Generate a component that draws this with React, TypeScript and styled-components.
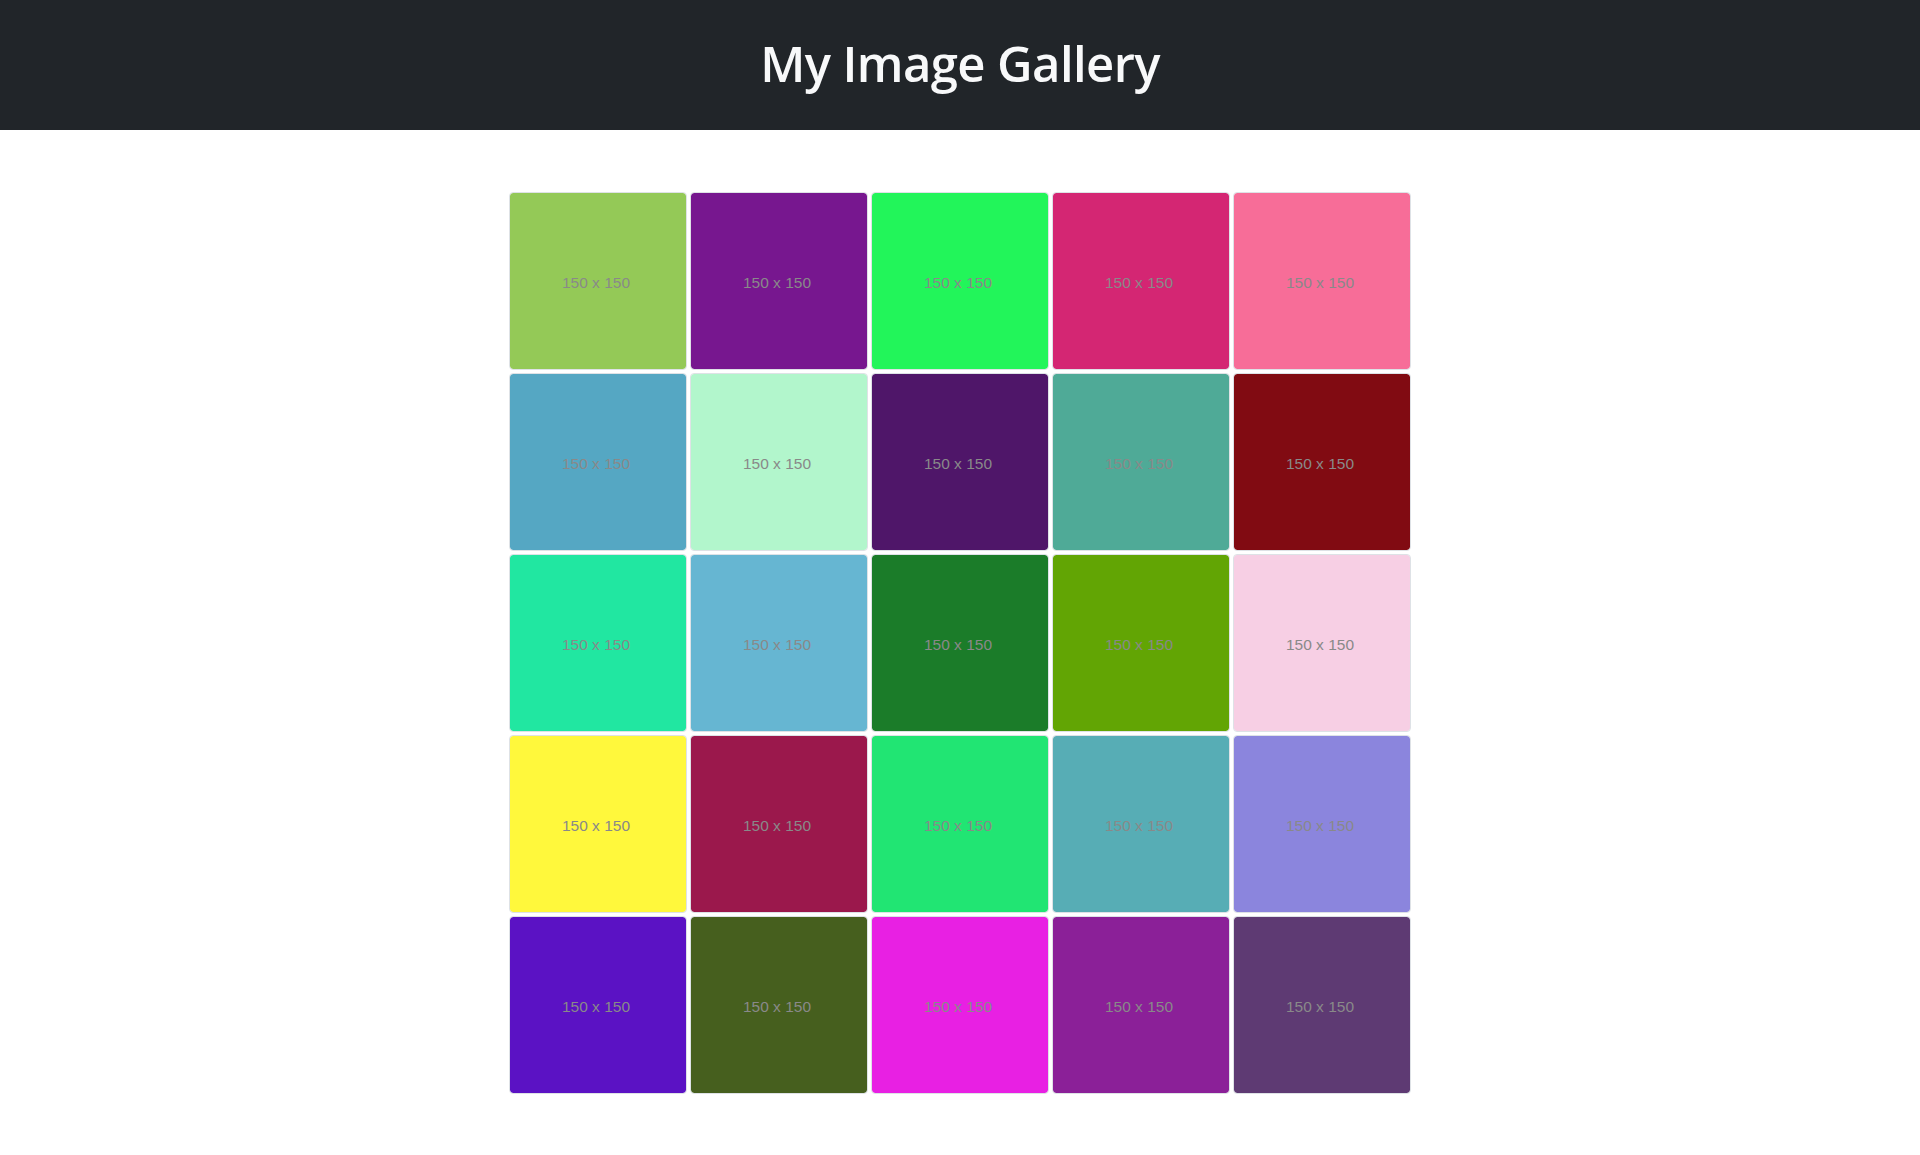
import React from "react";
import styled, {createGlobalStyle} from "styled-components";

const GlobalStyle = createGlobalStyle`
  html, body {
    margin: 0;
    padding: 0;
    background: #ffffff;
  }
`;

const Header = styled.header`
  background-color: #212529;
  height: 130px;
  display: flex;
  align-items: center;
  justify-content: center;
`;

const Title = styled.h1`
  margin: 0;
  padding-bottom: 4px;
  color: #f8f9fa;
  font-family: "Open Sans", "Noto Sans", sans-serif;
  font-weight: 600;
  font-size: 49px;
  letter-spacing: -0.6px;
`;

const Main = styled.main`
  display: flex;
  justify-content: center;
  padding-top: 62px;
  padding-bottom: 61px;
`;

const Grid = styled.div`
  display: grid;
  grid-template-columns: repeat(5, 178px);
  grid-auto-rows: 178px;
  gap: 3px;
`;

const Tile = styled.div<{ $bg: string }>`
  display: flex;
  align-items: center;
  justify-content: center;
  box-sizing: border-box;
  background-color: ${p => p.$bg};
  border: 1px solid #dee2e6;
  border-radius: 4px;
  background-clip: padding-box;
`;

const Label = styled.span`
  font-family: "Liberation Sans", Arial, sans-serif;
  font-size: 15.5px;
  color: #898989;
  margin-top: 3px;
  margin-right: 4px;
`;

const colours = [
    "#94c957", "#77178f", "#22f55a", "#d42673", "#f76d98",
    "#55a7c3", "#b2f6cc", "#4f1669", "#4faa97", "#810b12",
    "#21e7a1", "#66b6d2", "#1b7c29", "#62a504", "#f7cfe4",
    "#fff83c", "#9b184c", "#21e573", "#57adb5", "#8b85dd",
    "#5b12c4", "#465f1e", "#e820e3", "#8b2098", "#5e3a73",
];

const App = () => {
    return (<>
        <GlobalStyle/>
        <Header>
            <Title>My Image Gallery</Title>
        </Header>
        <Main>
            <Grid>
                {colours.map((c, i) => (
                    <Tile key={i} $bg={c}>
                        <Label>150 x 150</Label>
                    </Tile>
                ))}
            </Grid>
        </Main>
    </>);
}

export default App;
